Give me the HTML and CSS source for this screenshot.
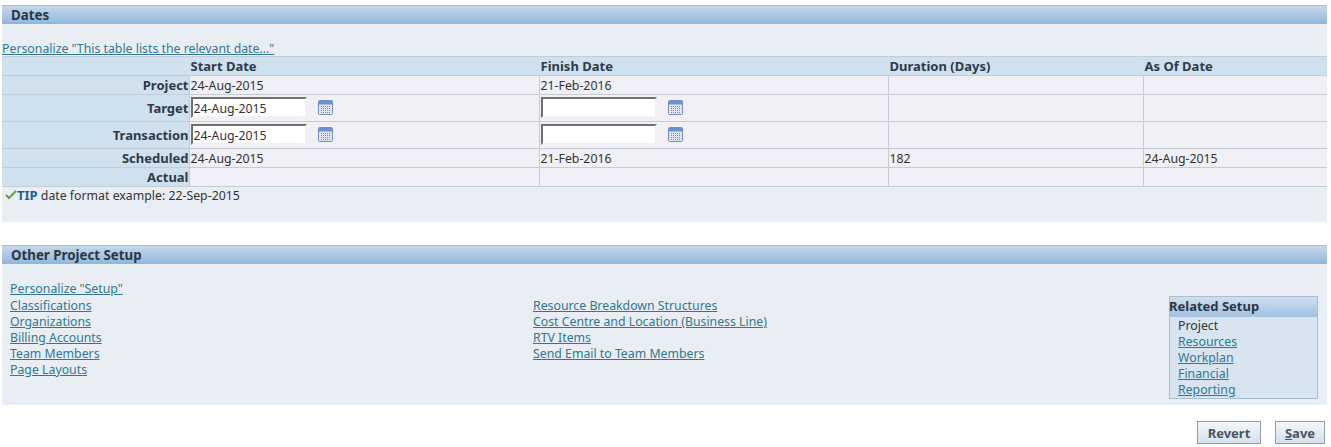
FILE: index.html
```html
<!DOCTYPE html>
<html lang="en">
<head>
  <meta charset="UTF-8">
  <title>Project Setup</title>
  <link rel="stylesheet" href="styles.css">
</head>
<body>
  <svg width="0" height="0" class="defs">
    <symbol id="cal" viewBox="0 0 15 15">
      <rect x="0.5" y="0.5" width="14" height="14" rx="1" fill="#dfe7f3" stroke="#6f8fc4"/>
      <rect x="1" y="1" width="13" height="3.5" fill="#6d90cf"/>
      <path d="M3 6.5h9M3 8.5h9M3 10.5h9M3 12.5h9" stroke="#7d8696" stroke-width="1" stroke-dasharray="1 1"/>
    </symbol>
  </svg>

  <div class="section dates">
    <h2 class="bar">Dates</h2>
    <a class="personalize" href="#">Personalize "This table lists the relevant date..."</a>
    <table class="dategrid">
      <tr class="head">
        <th class="c1"></th>
        <th class="c2">Start Date</th>
        <th class="c3">Finish Date</th>
        <th class="c4">Duration (Days)</th>
        <th class="c5">As Of Date</th>
      </tr>
      <tr>
        <th>Project</th>
        <td>24-Aug-2015</td>
        <td>21-Feb-2016</td>
        <td></td>
        <td></td>
      </tr>
      <tr class="inputrow">
        <th>Target</th>
        <td><input class="dateinput" value="24-Aug-2015"><svg class="calicon"><use href="#cal"/></svg></td>
        <td><input class="dateinput"><svg class="calicon"><use href="#cal"/></svg></td>
        <td></td>
        <td></td>
      </tr>
      <tr class="inputrow">
        <th>Transaction</th>
        <td><input class="dateinput" value="24-Aug-2015"><svg class="calicon"><use href="#cal"/></svg></td>
        <td><input class="dateinput"><svg class="calicon"><use href="#cal"/></svg></td>
        <td></td>
        <td></td>
      </tr>
      <tr>
        <th>Scheduled</th>
        <td>24-Aug-2015</td>
        <td>21-Feb-2016</td>
        <td>182</td>
        <td>24-Aug-2015</td>
      </tr>
      <tr>
        <th>Actual</th>
        <td></td>
        <td></td>
        <td></td>
        <td></td>
      </tr>
    </table>
    <div class="tip">
      <svg class="tipicon" viewBox="0 0 12 10"><path d="M1 5 4 8 11 1" fill="none" stroke="#5fa83c" stroke-width="2"/></svg><b>TIP</b> date format example: 22-Sep-2015
    </div>
  </div>

  <div class="section setup">
    <h2 class="bar">Other Project Setup</h2>
    <div class="setupbody">
      <div class="linkcol first">
        <a class="personalize2" href="#">Personalize "Setup"</a>
        <a href="#">Classifications</a>
        <a href="#">Organizations</a>
        <a href="#">Billing Accounts</a>
        <a href="#">Team Members</a>
        <a href="#">Page Layouts</a>
      </div>
      <div class="linkcol second">
        <a href="#">Resource Breakdown Structures</a>
        <a href="#">Cost Centre and Location (Business Line)</a>
        <a href="#">RTV Items</a>
        <a href="#">Send Email to Team Members</a>
      </div>
      <div class="related">
        <div class="relatedhead">Related Setup</div>
        <div class="linkcol relatedlinks">
          <span>Project</span>
          <a href="#">Resources</a>
          <a href="#">Workplan</a>
          <a href="#">Financial</a>
          <a href="#">Reporting</a>
        </div>
      </div>
    </div>
  </div>

  <div class="buttons">
    <button class="btn revert">Revert</button>
    <button class="btn save"><u>S</u>ave</button>
  </div>
</body>
</html>
```

FILE: styles.css
```css
*{
  box-sizing:border-box;
}
body{
  margin:0;
  padding:5px 4px 0 2px;
  background:#fff;
  font-family:"Noto Sans","DejaVu Sans",sans-serif;
  font-size:12.3px;
  color:#333;
}
.defs{
  position:absolute;
}
a{
  color:#2f7890;
}
.section{
  background:#e9eef5;
}
.bar{
  margin:0;
  height:19px;
  padding-left:9px;
  font-size:13.3px;
  line-height:19px;
  font-weight:700;
  color:#2b3646;
  background:linear-gradient(#c4d8ea,#a0c2e0 70%,#8fb6d8);
  border-top:1px solid #a9c0d6;
}
.dates{
  height:217px;
}
.personalize{
  display:block;
  height:32px;
  padding-top:17px;
  line-height:16px;
}
.dategrid{
  width:100%;
  border-collapse:collapse;
  table-layout:fixed;
  background:#f0f0f6;
  border-top:1px solid #c5ccd6;
}
.dategrid tr{
  height:19px;
}
.dategrid .inputrow{
  height:27px;
}
.dategrid th,.dategrid td{
  padding:1px 1px 0;
  border-bottom:1px solid #c5ccd6;
  border-left:1px solid #c5ccd6;
  font-size:12.3px;
  line-height:16px;
  text-align:left;
  white-space:nowrap;
}
.dategrid th{
  padding:0 1px 1px;
  background:#cfe0ef;
  font-weight:700;
  color:#2f3a48;
  font-size:13px;
}
.dategrid tr th:first-child{
  padding-right:0;
  text-align:right;
  border-left:0;
}
.dategrid .inputrow td{
  padding:0 1px 1px;
}
.head th{
  border-left-color:#cfe0ef !important;
}
.c1{width:187px;}
.c2{width:350px;}
.c3{width:349px;}
.c4{width:255px;}
.c5{width:184px;}
.dateinput{
  width:116px;
  height:21px;
  padding:1px 1px 0;
  margin:0 11px 0 0;
  vertical-align:middle;
  font:12.3px "Noto Sans","DejaVu Sans",sans-serif;
  color:#333;
  background:#fff;
  border:2px solid;
  border-color:#6f6f6f #f1f1f1 #f1f1f1 #6f6f6f;
}
.calicon{
  width:15px;
  height:15px;
  vertical-align:middle;
}
.tip{
  padding:0 0 0 3px;
  line-height:16px;
}
.tip b{
  color:#25618f;
  font-size:13px;
}
.tipicon{
  width:12px;
  height:10px;
}
.setup{
  margin-top:23px;
  height:160px;
}
.setupbody{
  display:flex;
  padding:17px 9px 0 8px;
}
.linkcol{
  display:flex;
  flex-direction:column;
  line-height:16px;
}
.linkcol.first{
  width:523px;
}
.personalize2{
  margin-bottom:1px;
}
.linkcol.second{
  padding-top:17px;
}
.related{
  margin-left:auto;
  margin-top:15px;
  width:149px;
  height:103px;
  background:#d8e4ef;
  border:1px solid #a9bdd0;
}
.relatedhead{
  height:20px;
  line-height:19px;
  text-indent:-1px;
  font-size:13px;
  font-weight:700;
  color:#2b3646;
  background:linear-gradient(#cfdfee,#a0c2e0);
}
.relatedlinks{
  padding-left:8px;
  padding-top:1px;
}
.buttons{
  display:flex;
  justify-content:flex-end;
  gap:14px;
  margin-top:16px;
  padding-right:2px;
}
.btn{
  height:23px;
  padding:0;
  font:700 13px "Noto Sans","DejaVu Sans",sans-serif;
  color:#4a5560;
  background:linear-gradient(#f4f7fa,#d5e1ec);
  border:1px solid #8fa0ad;
}
.revert{width:64px;}
.save{width:50px;}
```
